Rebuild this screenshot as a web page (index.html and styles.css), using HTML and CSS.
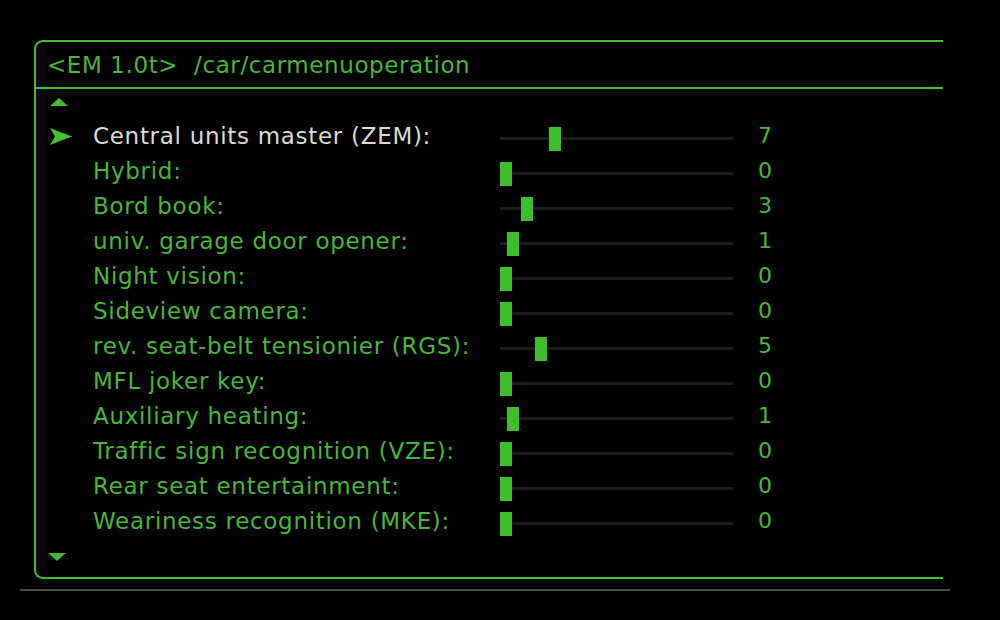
FILE: index.html
```html
<!DOCTYPE html>
<html>
<head>
<meta charset="utf-8">
<link rel="stylesheet" href="styles.css">
</head>
<body>
<div class="screen">
  <div class="frame">
    <div class="header">&lt;EM 1.0t&gt;  /car/carmenuoperation</div>
    <div class="content">
      <div class="scroll-up">
        <svg width="18" height="8" viewBox="0 0 18 8"><polygon points="0,8 9,0 18,8" fill="#45b834"/></svg>
      </div>
      <div class="list">
        <div class="row selected">
          <div class="cursor"><svg width="22" height="17" viewBox="0 0 22 17"><polygon points="0,0 22,8.5 0,17 5,8.5" fill="#45c034"/></svg></div>
          <div class="label">Central units master (ZEM):</div>
          <div class="slider"><div class="track"></div><div class="thumb" style="left:49px"></div></div>
          <div class="value">7</div>
        </div>
        <div class="row">
          <div class="cursor"></div>
          <div class="label">Hybrid:</div>
          <div class="slider"><div class="track"></div><div class="thumb" style="left:0px"></div></div>
          <div class="value">0</div>
        </div>
        <div class="row">
          <div class="cursor"></div>
          <div class="label">Bord book:</div>
          <div class="slider"><div class="track"></div><div class="thumb" style="left:21px"></div></div>
          <div class="value">3</div>
        </div>
        <div class="row">
          <div class="cursor"></div>
          <div class="label">univ. garage door opener:</div>
          <div class="slider"><div class="track"></div><div class="thumb" style="left:7px"></div></div>
          <div class="value">1</div>
        </div>
        <div class="row">
          <div class="cursor"></div>
          <div class="label">Night vision:</div>
          <div class="slider"><div class="track"></div><div class="thumb" style="left:0px"></div></div>
          <div class="value">0</div>
        </div>
        <div class="row">
          <div class="cursor"></div>
          <div class="label">Sideview camera:</div>
          <div class="slider"><div class="track"></div><div class="thumb" style="left:0px"></div></div>
          <div class="value">0</div>
        </div>
        <div class="row">
          <div class="cursor"></div>
          <div class="label">rev. seat-belt tensionier (RGS):</div>
          <div class="slider"><div class="track"></div><div class="thumb" style="left:35px"></div></div>
          <div class="value">5</div>
        </div>
        <div class="row">
          <div class="cursor"></div>
          <div class="label">MFL joker key:</div>
          <div class="slider"><div class="track"></div><div class="thumb" style="left:0px"></div></div>
          <div class="value">0</div>
        </div>
        <div class="row">
          <div class="cursor"></div>
          <div class="label">Auxiliary heating:</div>
          <div class="slider"><div class="track"></div><div class="thumb" style="left:7px"></div></div>
          <div class="value">1</div>
        </div>
        <div class="row">
          <div class="cursor"></div>
          <div class="label">Traffic sign recognition (VZE):</div>
          <div class="slider"><div class="track"></div><div class="thumb" style="left:0px"></div></div>
          <div class="value">0</div>
        </div>
        <div class="row">
          <div class="cursor"></div>
          <div class="label">Rear seat entertainment:</div>
          <div class="slider"><div class="track"></div><div class="thumb" style="left:0px"></div></div>
          <div class="value">0</div>
        </div>
        <div class="row">
          <div class="cursor"></div>
          <div class="label">Weariness recognition (MKE):</div>
          <div class="slider"><div class="track"></div><div class="thumb" style="left:0px"></div></div>
          <div class="value">0</div>
        </div>
      </div>
      <div class="scroll-down">
        <svg width="18" height="8" viewBox="0 0 18 8"><polygon points="0,0 18,0 9,8" fill="#45b834"/></svg>
      </div>
    </div>
  </div>
  <div class="bezel"></div>
</div>
</body>
</html>
```
FILE: styles.css
```css
html, body {
  margin: 0;
  padding: 0;
  background: #000;
}
body {
  width: 1000px;
  height: 620px;
  overflow: hidden;
  font-family: "DejaVu Sans", "Liberation Sans", sans-serif;
}
.screen {
  padding-top: 40px;
}
.frame {
  margin-left: 34px;
  width: 907px;
  height: 535px;
  border: 2px solid #46bb36;
  border-right: none;
  border-radius: 9px 0 0 9px;
  display: flex;
  flex-direction: column;
}
.header {
  height: 45px;
  border-bottom: 2px solid #46bb36;
  color: #48b63a;
  font-size: 23px;
  line-height: 46px;
  padding-left: 11px;
  white-space: pre;
  letter-spacing: 0.6px;
}
.content {
  display: flex;
  flex-direction: column;
  flex: 1;
}
.scroll-up {
  height: 29px;
  padding-left: 14px;
  padding-top: 9px;
  box-sizing: border-box;
  line-height: 0;
}
.list {
  display: flex;
  flex-direction: column;
}
.row {
  height: 35px;
  display: grid;
  grid-template-columns: 57px 407px 233px 25px auto;
  align-items: center;
}
.cursor {
  line-height: 0;
  padding-left: 14px;
  padding-top: 1px;
}
.label {
  color: #48b63a;
  font-size: 23px;
  white-space: nowrap;
  letter-spacing: 0.7px;
}
.selected .label {
  color: #dcdbd3;
}
.slider {
  position: relative;
  height: 35px;
}
.track {
  position: absolute;
  left: 0;
  right: 0;
  top: 19px;
  height: 3px;
  background: #1b1d1b;
}
.thumb {
  position: absolute;
  top: 9px;
  width: 12px;
  height: 24px;
  background: #3cbf2c;
}
.value {
  grid-column: 5;
  color: #48b63a;
  font-size: 22px;
}
.scroll-down {
  margin-top: 15px;
  padding-left: 12px;
  line-height: 0;
}
.bezel {
  margin-top: 10px;
  margin-left: 20px;
  width: 930px;
  height: 2px;
  background: #4a4a4c;
}
```
